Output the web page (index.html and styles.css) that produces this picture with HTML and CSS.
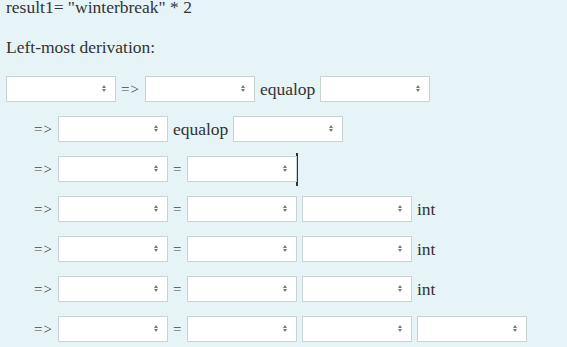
FILE: index.html
```html
<!DOCTYPE html>
<html lang="en">
<head>
  <meta charset="UTF-8">
  <title>Left-most derivation</title>
  <link rel="stylesheet" href="styles.css">
</head>
<body>
  <p class="expr">result1= "winterbreak" * 2</p>
  <p class="title">Left-most derivation:</p>

  <div class="derivation">
    <div class="step first">
      <span class="pick"><select></select></span>
      <span class="sym">=&gt;</span>
      <span class="pick"><select></select></span>
      <span class="word">equalop</span>
      <span class="pick"><select></select></span>
    </div>

    <div class="step">
      <span class="sym">=&gt;</span>
      <span class="pick"><select></select></span>
      <span class="word">equalop</span>
      <span class="pick"><select></select></span>
    </div>

    <div class="step">
      <span class="sym">=&gt;</span>
      <span class="pick"><select></select></span>
      <span class="sym eq">=</span>
      <span class="pick"><select></select></span>
      <span class="caret"></span>
    </div>

    <div class="step">
      <span class="sym">=&gt;</span>
      <span class="pick"><select></select></span>
      <span class="sym eq">=</span>
      <span class="pick"><select></select></span>
      <span class="pick"><select></select></span>
      <span class="word">int</span>
    </div>

    <div class="step">
      <span class="sym">=&gt;</span>
      <span class="pick"><select></select></span>
      <span class="sym eq">=</span>
      <span class="pick"><select></select></span>
      <span class="pick"><select></select></span>
      <span class="word">int</span>
    </div>

    <div class="step">
      <span class="sym">=&gt;</span>
      <span class="pick"><select></select></span>
      <span class="sym eq">=</span>
      <span class="pick"><select></select></span>
      <span class="pick"><select></select></span>
      <span class="word">int</span>
    </div>

    <div class="step">
      <span class="sym">=&gt;</span>
      <span class="pick"><select></select></span>
      <span class="sym eq">=</span>
      <span class="pick"><select></select></span>
      <span class="pick"><select></select></span>
      <span class="pick"><select></select></span>
    </div>
  </div>
</body>
</html>
```

FILE: styles.css
```css
body {
  margin: 0;
  padding: 0 6px;
  background-color: #e7f4f7;
  color: #333;
  font-family: 'Liberation Serif', serif;
  font-size: 17.5px;
}

p {
  margin: 0;
  line-height: 20px;
}

.expr {
  margin-top: -3px;
}

.title {
  margin-top: 20px;
}

.derivation {
  margin-top: 19px;
  display: flex;
  flex-direction: column;
  gap: 14px;
}

.step {
  display: flex;
  align-items: center;
  gap: 5px;
  height: 26px;
  padding-left: 28px;
}

.step.first {
  padding-left: 0;
}

.sym {
  font-size: 15px;
  letter-spacing: 1px;
  color: #444;
}

.sym.eq {
  letter-spacing: 0.5px;
}

.pick {
  position: relative;
  display: block;
  flex: none;
  width: 110px;
  height: 26px;
}

.pick select {
  appearance: none;
  -webkit-appearance: none;
  width: 100%;
  height: 100%;
  margin: 0;
  border: 1px solid #c9d3d6;
  border-radius: 0;
  background: #fff;
}

/* little up/down arrows of the dropdown */
.pick::before,
.pick::after {
  content: "";
  position: absolute;
  right: 10px;
  width: 0;
  height: 0;
  border-left: 2.5px solid transparent;
  border-right: 2.5px solid transparent;
  pointer-events: none;
}

.pick::before {
  top: 9px;
  border-bottom: 3.5px solid #777;
}

.pick::after {
  top: 13px;
  border-top: 3.5px solid #777;
}

.caret {
  flex: none;
  width: 2px;
  height: 33px;
  margin-left: -6px;
  background: #333;
}
```
